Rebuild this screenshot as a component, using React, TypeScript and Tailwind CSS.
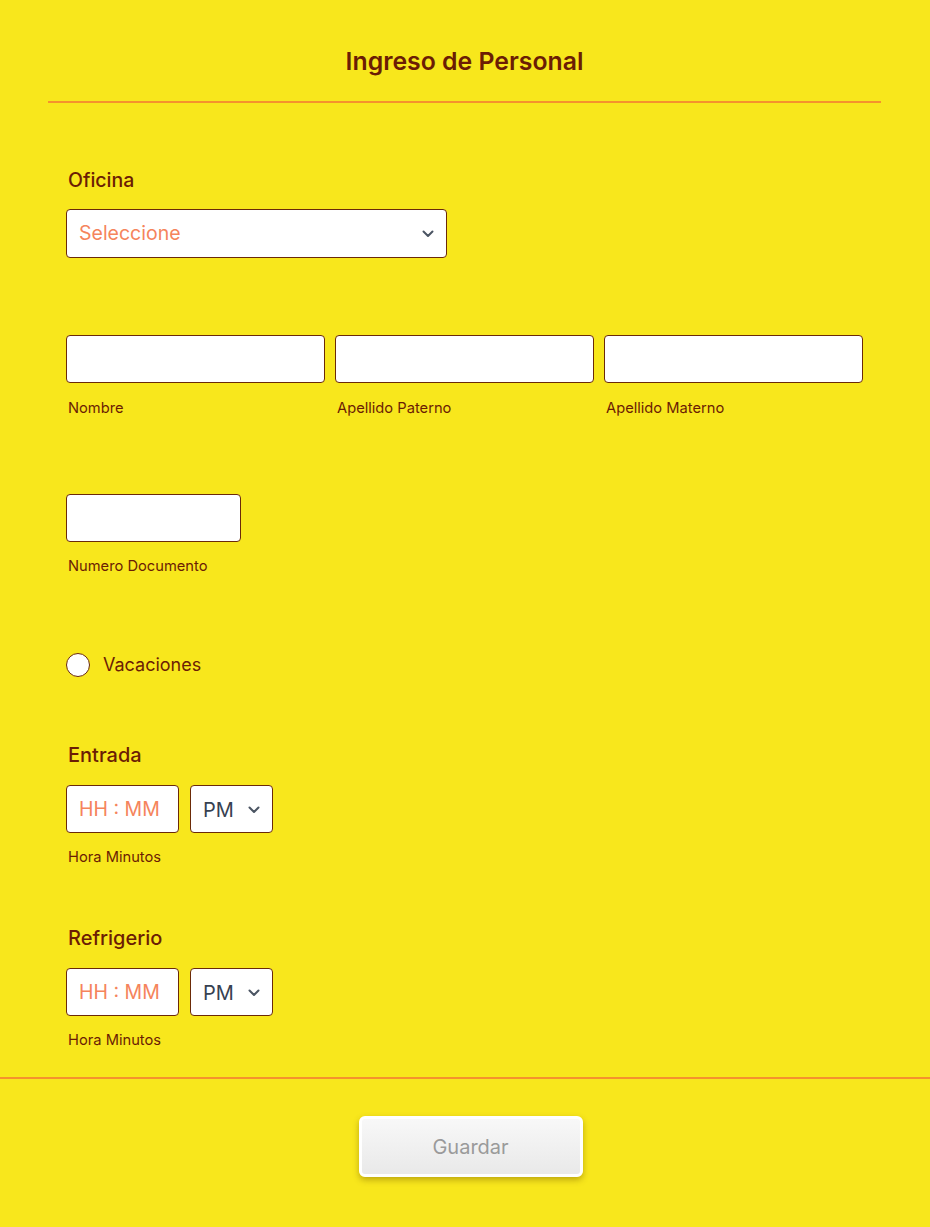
import React from "react";

const TXT = "text-[#6b1d04]";

function Chevron() {
  return (
    <svg width="12" height="8" viewBox="0 0 12 8" fill="none">
      <path d="M1.5 1.5 L6 6 L10.5 1.5" stroke="#4b5563" strokeWidth="2" strokeLinecap="round" strokeLinejoin="round" />
    </svg>
  );
}

function TextBox({ w }: { w: string }) {
  return <div className={`${w} h-[48px] bg-white border border-[#6b2a08] rounded-[4px]`} />;
}

function TimeRow() {
  return (
    <div className="flex gap-[11px]">
      <div className="w-[113px] h-[48px] bg-white border border-[#6b2a08] rounded-[4px] flex items-center pl-[12px] pt-[1px] text-[19.5px] text-[#f5845c]">
        HH : MM
      </div>
      <div className="w-[83px] h-[48px] bg-white border border-[#6b2a08] rounded-[4px] flex items-center justify-between pl-[12px] pr-[12px] pt-[1px] text-[20px] text-[#374151]">
        <span>PM</span>
        <Chevron />
      </div>
    </div>
  );
}

export default function App() {
  return (
    <div className="w-[930px] min-h-[1227px] bg-[#f8e71c]" style={{ fontFamily: "Inter, 'Noto Sans', sans-serif" }}>
      {/* header */}
      <div className="pt-[45px] ml-[48px] mr-[49px]">
        <h1 className={`text-[24.8px] leading-[32px] font-semibold text-center ${TXT}`}>Ingreso de Personal</h1>
        <div className="mt-[24px] h-[2px] bg-[#f5922d]" />
      </div>

      <div className="pl-[66px] pr-[67px]">
        {/* Oficina */}
        <div className={`mt-[63px] pl-[2px] text-[19.5px] leading-[28px] font-medium ${TXT}`}>Oficina</div>
        <div className="mt-[15px] w-[381px] h-[49px] bg-white border border-[#6b2a08] rounded-[4px] flex items-center justify-between pl-[12px] pr-[12px] pt-[1px] text-[19.5px] text-[#f5845c]">
          <span>Seleccione</span>
          <Chevron />
        </div>

        {/* Names */}
        <div className="mt-[77px] flex gap-[10px]">
          {["Nombre", "Apellido Paterno", "Apellido Materno"].map((l) => (
            <div key={l} className="w-[259px]">
              <TextBox w="w-[259px]" />
              <div className={`mt-[15px] pl-[2px] text-[14.7px] leading-[20px] ${TXT}`}>{l}</div>
            </div>
          ))}
        </div>

        {/* Documento */}
        <div className="mt-[76px]">
          <TextBox w="w-[175px]" />
          <div className={`mt-[14px] pl-[2px] text-[14.7px] leading-[20px] ${TXT}`}>Numero Documento</div>
        </div>

        {/* Vacaciones */}
        <div className="mt-[77px] flex items-center gap-[13px]">
          <div className="w-[24px] h-[24px] rounded-full bg-white border border-[#6b2a08]" />
          <span className={`text-[18px] leading-[24px] ${TXT}`}>Vacaciones</span>
        </div>

        {/* Entrada */}
        <div className={`mt-[64px] pl-[2px] text-[20px] leading-[28px] font-medium ${TXT}`}>Entrada</div>
        <div className="mt-[16px]">
          <TimeRow />
        </div>
        <div className={`mt-[14px] pl-[2px] text-[14.7px] leading-[20px] ${TXT}`}>Hora Minutos</div>

        {/* Refrigerio */}
        <div className={`mt-[57px] pl-[2px] text-[20px] leading-[28px] font-medium ${TXT}`}>Refrigerio</div>
        <div className="mt-[16px]">
          <TimeRow />
        </div>
        <div className={`mt-[14px] pl-[2px] text-[14.7px] leading-[20px] ${TXT}`}>Hora Minutos</div>
      </div>

      <div className="mt-[27px] h-[2px] bg-[#f5922d]" />

      <div className="pt-[37px] pb-[50px] flex justify-center pl-[11px]">
        <button className="w-[224px] h-[61px] rounded-[6px] border-[3px] border-white bg-gradient-to-b from-[#f8f8f8] to-[#e9e9e9] shadow-[0_3px_6px_rgba(120,90,0,0.45)] text-[20px] text-[#9a9a9a]">
          Guardar
        </button>
      </div>
    </div>
  );
}
